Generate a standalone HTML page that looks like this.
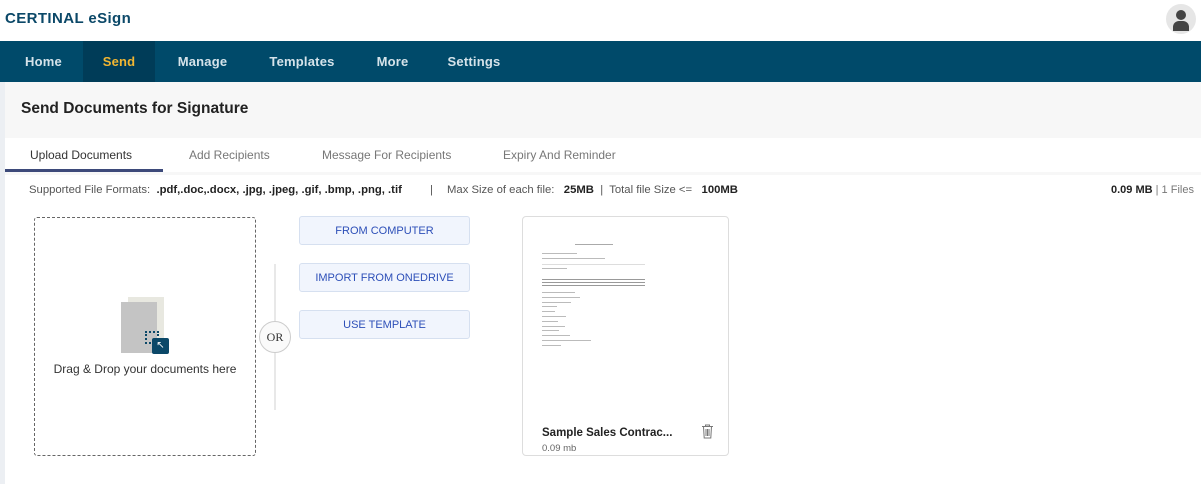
<!DOCTYPE html>
<html><head><style>
*{margin:0;padding:0;box-sizing:border-box}
body{width:1201px;height:484px;overflow:hidden;background:#fff;font-family:"Liberation Sans",sans-serif;position:relative;color:#222}
.abs{position:absolute}
.nav a{position:absolute;top:0;height:41px;line-height:42px;color:#d5e3ea;font-size:13px;text-align:center;font-weight:bold;letter-spacing:0.2px}
.btn{position:absolute;left:299px;width:171px;height:29px;background:#f1f5fd;border:1px solid #d6e0f0;border-radius:3px;color:#2d4fb8;font-size:11px;text-align:center;line-height:29px}
.ln{position:absolute;height:1px;background:#aaa}
</style></head><body>
<div class="abs" style="left:5px;top:10px;font-size:15px;font-weight:bold;color:#0b4868;letter-spacing:0.4px">CERTINAL eSign</div>
<div class="abs" style="left:1166px;top:4px;width:30px;height:30px;border-radius:50%;background:#e6e6e6;overflow:hidden">
<div class="abs" style="left:10px;top:6px;width:10px;height:10px;border-radius:50%;background:#444"></div>
<div class="abs" style="left:7px;top:17px;width:16px;height:10px;border-radius:6px 6px 0 0;background:#444"></div></div>
<div class="abs nav" style="left:0;top:41px;width:1201px;height:41px;background:#004a6a">
<a style="left:0;width:87px">Home</a>
<a style="left:83px;width:72px;background:#003c58;color:#f2b632">Send</a>
<a style="left:165px;width:75px">Manage</a>
<a style="left:258px;width:88px">Templates</a>
<a style="left:365px;width:55px">More</a>
<a style="left:438px;width:72px">Settings</a>
</div>
<div class="abs" style="left:0;top:82px;width:1201px;height:93px;background:#f7f7f7"></div>
<div class="abs" style="left:0;top:82px;width:5px;height:402px;background:#eceff3"></div>
<div class="abs" style="left:21px;top:100px;font-size:15.5px;font-weight:bold;color:#222">Send Documents for Signature</div>
<div class="abs" style="left:5px;top:138px;width:1196px;height:34px;background:#fff"></div>
<div class="abs" style="left:5px;top:169px;width:158px;height:3px;background:#3d4a7a"></div>
<div class="abs" style="left:30px;top:148px;font-size:12px;color:#333">Upload Documents</div>
<div class="abs" style="left:189px;top:148px;font-size:12px;color:#777">Add Recipients</div>
<div class="abs" style="left:322px;top:148px;font-size:12px;color:#777">Message For Recipients</div>
<div class="abs" style="left:503px;top:148px;font-size:12px;color:#777">Expiry And Reminder</div>
<div class="abs" style="left:29px;top:184px;font-size:11.3px;color:#555;white-space:nowrap">Supported File Formats:&nbsp; <b style="color:#222">.pdf,.doc,.docx, .jpg, .jpeg, .gif, .bmp, .png, .tif</b></div>
<div class="abs" style="left:430px;top:184px;font-size:11.3px;color:#555">|</div>
<div class="abs" style="left:447px;top:184px;font-size:11.3px;color:#555;white-space:nowrap">Max Size of each file:&nbsp;&nbsp; <b style="color:#222">25MB</b> &nbsp;|&nbsp; Total file Size &lt;= &nbsp;&nbsp;<b style="color:#222">100MB</b></div>
<div class="abs" style="left:1111px;top:184px;font-size:11px;color:#777;white-space:nowrap"><b style="color:#222">0.09 MB</b> | 1 Files</div>
<div class="abs" style="left:34px;top:217px;width:222px;height:239px;border:1px dashed #666;border-radius:3px"></div>
<div class="abs" style="left:128px;top:297px;width:36px;height:54px;background:#e8e8e0"></div>
<div class="abs" style="left:121px;top:302px;width:36px;height:51px;background:#c4c4c4"></div>
<div class="abs" style="left:145px;top:331px;width:14px;height:13px;border:2px dotted #0b4868"></div>
<div class="abs" style="left:152px;top:338px;width:17px;height:16px;background:#0b4868;border-radius:2px;color:#fff;font-size:10px;text-align:center;line-height:16px">&#8598;</div>
<div class="abs" style="left:34px;top:362px;width:222px;text-align:center;font-size:12px;color:#333">Drag &amp; Drop your documents here</div>
<div class="abs" style="left:274px;top:264px;width:2px;height:146px;background:#e8e8e8"></div>
<div class="abs" style="left:259px;top:321px;width:32px;height:32px;border-radius:50%;border:1px solid #ccc;background:#fafafa;font-family:'Liberation Serif',serif;font-size:12px;text-align:center;line-height:30px;color:#333">OR</div>
<div class="btn" style="top:216px">FROM COMPUTER</div>
<div class="btn" style="top:263px">IMPORT FROM ONEDRIVE</div>
<div class="btn" style="top:310px">USE TEMPLATE</div>
<div class="abs" style="left:522px;top:216px;width:207px;height:240px;border:1px solid #ddd;border-radius:4px"></div>
<div class="ln" style="left:575px;top:244px;width:38px"></div>
<div class="ln" style="left:542px;top:253px;width:35px;background:#bbb"></div>
<div class="ln" style="left:542px;top:258px;width:63px;background:#bbb"></div>
<div class="ln" style="left:542px;top:264px;width:103px;background:#ddd"></div>
<div class="ln" style="left:542px;top:268px;width:25px;background:#bbb"></div>
<div class="ln" style="left:542px;top:279px;width:103px;background:#999"></div>
<div class="ln" style="left:542px;top:282px;width:103px;background:#999"></div>
<div class="ln" style="left:542px;top:285px;width:103px;background:#999"></div>
<div class="ln" style="left:542px;top:292px;width:33px;background:#bbb"></div>
<div class="ln" style="left:542px;top:297px;width:38px;background:#bbb"></div>
<div class="ln" style="left:542px;top:302px;width:29px;background:#bbb"></div>
<div class="ln" style="left:542px;top:306px;width:15px;background:#bbb"></div>
<div class="ln" style="left:542px;top:311px;width:13px;background:#bbb"></div>
<div class="ln" style="left:542px;top:316px;width:24px;background:#bbb"></div>
<div class="ln" style="left:542px;top:321px;width:16px;background:#bbb"></div>
<div class="ln" style="left:542px;top:326px;width:23px;background:#bbb"></div>
<div class="ln" style="left:542px;top:330px;width:17px;background:#bbb"></div>
<div class="ln" style="left:542px;top:335px;width:28px;background:#bbb"></div>
<div class="ln" style="left:542px;top:340px;width:49px;background:#bbb"></div>
<div class="ln" style="left:542px;top:345px;width:19px;background:#bbb"></div>
<div class="abs" style="left:542px;top:427px;font-size:11.5px;font-weight:bold;color:#222">Sample Sales Contrac...</div>
<div class="abs" style="left:542px;top:443px;font-size:9.5px;color:#666">0.09 mb</div>
<svg class="abs" style="left:701px;top:424px" width="13" height="15" viewBox="0 0 13 15"><path d="M1 2.5h11M4.5 2.5V1h4v1.5M2.5 2.5l.7 11.5h6.6l.7-11.5M5 5v7M6.5 5v7M8 5v7" fill="none" stroke="#777" stroke-width="1"/></svg>
</body></html>
